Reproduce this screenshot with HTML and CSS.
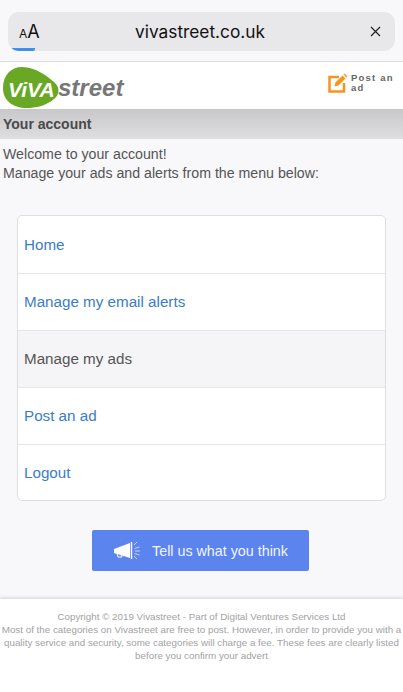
FILE: index.html
```html
<!DOCTYPE html>
<html lang="en">
<head>
    <meta charset="UTF-8">
    <title>Your account</title>
    <link rel="stylesheet" href="styles.css">
</head>
<body>
<div class="browser">
    <div class="urlbar">
        <span class="aa"><small>A</small>A</span>
        <span class="url">vivastreet.co.uk</span>
        <span class="close">
            <svg width="11" height="11" viewBox="0 0 11 11"><path d="M1 1l9 9M10 1l-9 9" stroke="#222" stroke-width="1.2" fill="none"/></svg>
        </span>
        <span class="progress"></span>
    </div>
</div>
<div class="header">
    <svg class="logo" width="124" height="47" viewBox="0 0 124 47">
        <path d="M1 26C1 12 10 5 20 5c14 0 27 10 34 17 4 5 3 11-2 15-8 7-19 9-27 9C10 46 1 38 1 26z" fill="#69a824"/>
        <text class="logo-viva" x="6" y="35">ViVA</text>
        <text class="logo-street" x="56" y="34">street</text>
    </svg>
    <a class="post-link">
        <svg width="20" height="20" viewBox="0 0 20 20">
            <path d="M11 4H1.500v14.500H16V10" fill="none" stroke="#f7941e" stroke-width="2.500"/>
            <path d="M6.500 13.500l1-4 7-7 3 3-7 7z" fill="#f7941e"/>
            <path d="M15.500 1.500l1-1 3 3-1 1z" fill="#f7941e"/>
        </svg>
        <span>Post an ad</span>
    </a>
</div>
<div class="title">Your account</div>
<div class="intro">
    Welcome to your account!<br>
    Manage your ads and alerts from the menu below:
</div>
<ul class="menu">
    <li><a>Home</a></li>
    <li><a>Manage my email alerts</a></li>
    <li class="current"><a>Manage my ads</a></li>
    <li><a>Post an ad</a></li>
    <li><a>Logout</a></li>
</ul>
<div class="feedback">
    <a class="feedback-btn">
        <svg width="28" height="20" viewBox="0 0 28 20">
            <path d="M1 8l16-6v15L1 12z" fill="#fff"/>
            <path d="M4 12.500l1 3.500h4l-1-2.500" fill="none" stroke="#fff"/>
            <path d="M18.500 1v17" stroke="#fff" stroke-width="1.400"/>
            <path d="M21 4l3-3M21.500 7.500l5-1.500M22 10h5M21.500 12.500l5 1.500M21 15l3 3" stroke="#dfe6fb" stroke-width=".8"/>
        </svg>
        <span>Tell us what you think</span>
    </a>
</div>
<div class="footer">
    Copyright © 2019 Vivastreet - Part of Digital Ventures Services Ltd<br>
    Most of the categories on Vivastreet are free to post. However, in order to provide you with a quality service and security, some categories will charge a fee. These fees are clearly listed before you confirm your advert
</div>
</body>
</html>
```

FILE: styles.css
```css
* {
    margin: 0;
    padding: 0;
    list-style: none;
    box-sizing: border-box;
}

html, body {
    height: 100%;
}

body {
    display: flex;
    flex-direction: column;
    background-color: #f8f7fa;
    font-family: "Liberation Sans", Arial, sans-serif;
    color: #555;
    overflow: hidden;
}

.browser {
    height: 62px;
    padding: 12px 8px 0;
    background-color: #f8f7f9;
    border-bottom: 1px solid #dcdcde;
}

.urlbar {
    height: 39px;
    position: relative;
    overflow: hidden;
    display: flex;
    align-items: center;
    padding: 0 14px 1px 11px;
    background-color: #e8e7e9;
    border-radius: 11px;
    color: #111;
}

.aa {
    flex: 1;
    font-family: "Inter", sans-serif;
    font-size: 18px;
}

.aa small {
    font-size: 12px;
}

.url {
    font-family: "Inter", sans-serif;
    font-size: 17.300px;
}

.close {
    flex: 1;
    display: flex;
    justify-content: flex-end;
}

.progress {
    position: absolute;
    left: 3px;
    bottom: 0;
    width: 24px;
    height: 3px;
    background-color: #3f8ff0;
    border-radius: 0 0 2px 2px;
}

.header {
    height: 47px;
    display: flex;
    justify-content: space-between;
    align-items: center;
    padding: 0 8px 0 2px;
    background-color: #fff;
}

.logo-viva {
    font-family: "Liberation Sans", sans-serif;
    font-size: 21px;
    font-weight: bold;
    font-style: italic;
    fill: #fff;
}

.logo-street {
    font-family: "Liberation Sans", sans-serif;
    font-size: 24px;
    font-style: italic;
    font-weight: bold;
    fill: #77777a;
}

.post-link {
    width: 67px;
    margin-bottom: 5px;
    display: flex;
    align-items: center;
    gap: 3px;
    font-size: 9.500px;
    font-weight: bold;
    line-height: 10px;
    letter-spacing: 1.200px;
    color: #666;
}

.post-link svg {
    flex: none;
}

.title {
    height: 30px;
    padding-left: 3px;
    line-height: 30px;
    font-size: 14px;
    font-weight: bold;
    color: #4a4a4c;
    background: linear-gradient(#c8c8ca, #dedee0);
}

.intro {
    padding: 6px 3px 0;
    font-size: 14.180px;
    line-height: 18.500px;
}

.menu {
    margin: 33px 17px 0 17px;
    background-color: #fff;
    border: 1px solid #dedee0;
    border-radius: 5px;
    overflow: hidden;
}

.menu li {
    height: 56.900px;
    padding-left: 6px;
    display: flex;
    align-items: center;
    font-size: 15.200px;
    color: #3c7dc4;
    border-top: 1px solid #e6e6e8;
}

.menu li:first-child {
    border-top: 0;
}

.menu .current {
    background-color: #f5f4f6;
    color: #555;
}

.feedback {
    margin-top: 29px;
    padding-right: 2px;
    display: flex;
    justify-content: center;
}

.feedback-btn {
    width: 217px;
    height: 41px;
    display: flex;
    align-items: center;
    justify-content: center;
    gap: 11px;
    background-color: #5c84ee;
    border-radius: 2px;
    color: #f2f4fd;
    font-size: 14.300px;
}

.footer {
    flex: 1;
    margin-top: 28px;
    padding-top: 11px;
    background-color: #fff;
    box-shadow: 0 -1px 3px #d0d0d4;
    text-align: center;
    font-size: 9.800px;
    line-height: 13px;
    color: #a2a2a6;
}
```
